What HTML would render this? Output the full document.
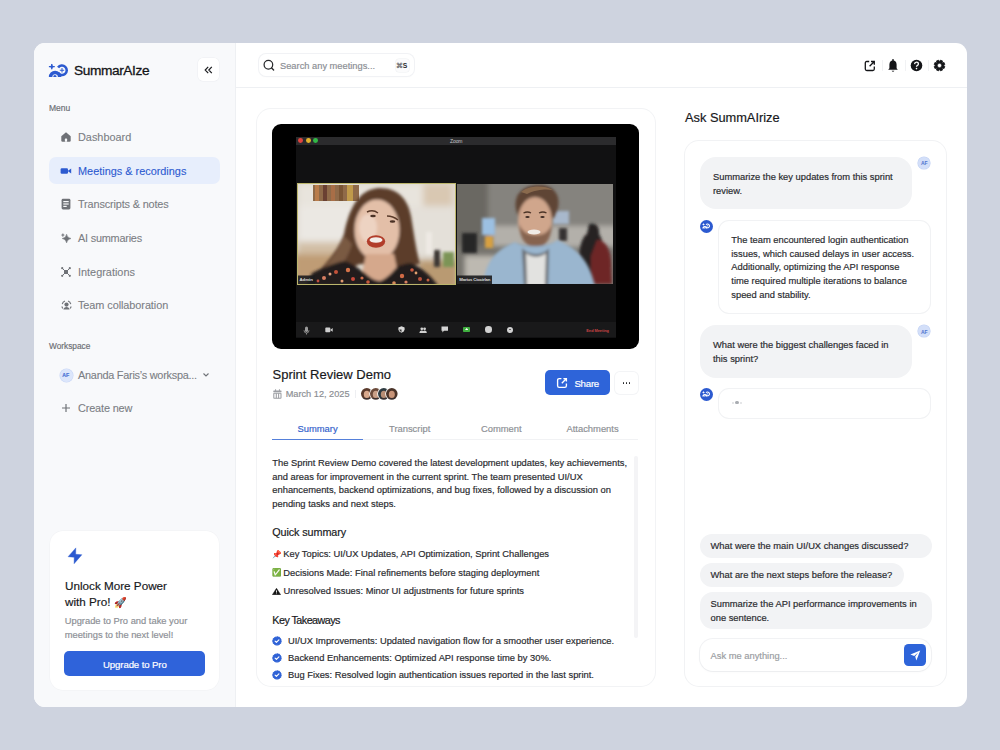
<!DOCTYPE html><html><head><meta charset="utf-8"><style>
*{box-sizing:border-box;margin:0;padding:0}
html,body{width:1000px;height:750px;overflow:hidden}
body{background:#ced3df;font-family:"Liberation Sans",sans-serif;position:relative}
.a{position:absolute}
.t{position:absolute;white-space:nowrap;line-height:1}
.m{-webkit-text-stroke:0.18px currentColor}
.s{-webkit-text-stroke:0.1px currentColor}
.b{-webkit-text-stroke:0.18px currentColor}
</style></head><body><div class="a" style="left:34px;top:43px;width:933px;height:664px;background:#fff;border-radius:11px"></div>
<div class="a" style="left:34px;top:43px;width:202px;height:664px;background:#f8f9fb;border-radius:11px 0 0 11px;border-right:1px solid #eef0f3"></div>
<svg class="a" style="left:48px;top:63px" width="22" height="15" viewBox="0 0 220 150">
<g fill="none" stroke="#2c5ad0">
<path d="M101 45.8 A47.5 47.5 0 1 1 98.9 96.8" stroke-width="25.5"/>
<path d="M26 139 A45 45 0 0 1 116 139" stroke-width="35"/>
</g>
<g fill="#2c5ad0">
<path d="M52 139 A17 18 0 0 1 86 139Z" fill="#2c5ad0"/>
<path d="M38 8 L46 28 L67 36 L46 44 L38 64 L30 44 L9 36 L30 28Z"/>
<path d="M32 9 H44 V63 H32Z M9 30 H67 V42 H9Z"/>
<path d="M135 50 H145 V94 H135Z M118 67 H162 V77 H118Z"/>
</g></svg>
<div class="t " style="left:74.00px;top:63.70px;font-size:13.7px;color:#141518;font-weight:400;letter-spacing:-0.4px;-webkit-text-stroke:0.3px #141518">SummarAIze</div>
<div class="a" style="left:198px;top:58px;width:21px;height:23px;background:#fff;border-radius:5px;box-shadow:0 0 0 0.5px #eceef1"></div>
<svg class="a" style="left:204px;top:66px" width="9" height="8" viewBox="0 0 9 8"><path d="M4.2 0.8 L1.2 4 L4.2 7.2 M7.8 0.8 L4.8 4 L7.8 7.2" fill="none" stroke="#1b1c1f" stroke-width="1.2"/></svg>
<div class="t b" style="left:49.00px;top:104.20px;font-size:8.5px;color:#6d7075;font-weight:400;">Menu</div>
<div class="a" style="left:49px;top:157px;width:171px;height:27px;background:#e7eefc;border-radius:7px"></div>
<div class="t s" style="left:78.00px;top:131.97px;font-size:10.9px;color:#7b7e84;font-weight:400;letter-spacing:0px">Dashboard</div>
<div class="t s" style="left:78.00px;top:165.57px;font-size:10.9px;color:#2c5ad0;font-weight:400;letter-spacing:0px">Meetings &amp; recordings</div>
<div class="t s" style="left:78.00px;top:199.17px;font-size:10.9px;color:#7b7e84;font-weight:400;letter-spacing:-0.15px">Transcripts &amp; notes</div>
<div class="t s" style="left:78.00px;top:232.77px;font-size:10.9px;color:#7b7e84;font-weight:400;letter-spacing:-0.22px">AI summaries</div>
<div class="t s" style="left:78.00px;top:267.27px;font-size:10.9px;color:#7b7e84;font-weight:400;letter-spacing:0px">Integrations</div>
<div class="t s" style="left:78.00px;top:300.47px;font-size:10.9px;color:#7b7e84;font-weight:400;letter-spacing:-0.07px">Team collaboration</div>
<svg class="a" style="left:61px;top:132px" width="10" height="10" viewBox="0 0 10 10"><path d="M5 0.3 L9.7 4.2 V8.6 Q9.7 9.8 8.5 9.8 H1.5 Q0.3 9.8 0.3 8.6 V4.2Z" fill="#6f7277"/><rect x="3.9" y="6.6" width="2.2" height="3.2" rx="0.6" fill="#f8f9fb"/></svg>
<svg class="a" style="left:60px;top:167px" width="12" height="8" viewBox="0 0 12 8"><rect x="0.6" y="1.2" width="7.4" height="5.6" rx="1.2" fill="#2c5ad0"/><path d="M7.6 4 L11.2 1.4 V6.6Z" fill="#2c5ad0"/></svg>
<svg class="a" style="left:61px;top:198px" width="10" height="12" viewBox="0 0 10 12"><rect x="0.6" y="0.8" width="8.8" height="10.6" rx="1.4" fill="#6f7277"/><rect x="2.3" y="3" width="5.4" height="1.2" fill="#f8f9fb"/><rect x="2.3" y="5.4" width="5.4" height="1.2" fill="#f8f9fb"/><rect x="2.3" y="7.8" width="3.4" height="1.2" fill="#f8f9fb"/></svg>
<svg class="a" style="left:61px;top:233px" width="11" height="11" viewBox="0 0 11 11"><path d="M5.6 1.2 Q6.2 4.9 10 5.5 Q6.2 6.1 5.6 9.9 Q5 6.1 1.2 5.5 Q5 4.9 5.6 1.2Z" fill="#6f7277" stroke="#6f7277" stroke-width="0.5" stroke-linejoin="round"/><path d="M1.9 0.5 Q2.1 1.9 3.4 2.1 Q2.1 2.3 1.9 3.7 Q1.7 2.3 0.4 2.1 Q1.7 1.9 1.9 0.5Z" fill="#6f7277" stroke="#6f7277" stroke-width="0.4"/></svg>
<svg class="a" style="left:61px;top:267px" width="10" height="10" viewBox="0 0 10 10"><g stroke="#6f7277" stroke-width="1"><path d="M1.2 1.2 L8.8 8.8 M8.8 1.2 L1.2 8.8"/></g><g fill="#6f7277"><circle cx="1.2" cy="1.2" r="1.1"/><circle cx="8.8" cy="1.2" r="1.1"/><circle cx="1.2" cy="8.8" r="1.1"/><circle cx="8.8" cy="8.8" r="1.1"/><rect x="3" y="3" width="4" height="4" rx="0.5"/></g></svg>
<svg class="a" style="left:61px;top:300px" width="11" height="10" viewBox="0 0 11 10"><g fill="#6f7277"><circle cx="5.5" cy="4.6" r="2.1"/><path d="M2.4 9.6 Q2.8 6.9 5.5 6.9 Q8.2 6.9 8.6 9.6Z"/></g><g fill="none" stroke="#6f7277" stroke-width="1.1"><path d="M1.2 4.2 Q1.8 1.6 4 0.9 M9.8 4.2 Q9.2 1.6 7 0.9 M0.8 6.4 L1.8 8.4 M10.2 6.4 L9.2 8.4"/></g></svg>
<div class="t b" style="left:49.00px;top:342.07px;font-size:8.3px;color:#6d7075;font-weight:400;">Workspace</div>
<div class="a" style="left:59.5px;top:368.5px;width:13px;height:13px;background:#dce6fb;border-radius:50%;box-shadow:0 0 0 0.5px #c9d7f6"></div>
<div class="t b" style="left:62.30px;top:373.40px;font-size:5.2px;color:#4b74d6;font-weight:700;">AF</div>
<div class="t s" style="left:78.00px;top:369.77px;font-size:10.9px;color:#7b7e84;font-weight:400;letter-spacing:-0.25px">Ananda Faris’s workspa...</div>
<svg class="a" style="left:202px;top:372px" width="8" height="6" viewBox="0 0 8 6"><path d="M1.5 1.5 L4 4 L6.5 1.5" fill="none" stroke="#6f7277" stroke-width="1.1"/></svg>
<svg class="a" style="left:61px;top:403px" width="10" height="10" viewBox="0 0 10 10"><path d="M5 1 V9 M1 5 H9" stroke="#6f7277" stroke-width="1.2"/></svg>
<div class="t s" style="left:78.00px;top:403.37px;font-size:10.9px;color:#7b7e84;font-weight:400;letter-spacing:-0.15px">Create new</div>
<div class="a" style="left:50px;top:531px;width:169px;height:159px;background:#fff;border-radius:13px;box-shadow:0 0 0 0.5px #f0f1f4"></div>
<svg class="a" style="left:66px;top:547px" width="17" height="17" viewBox="0 0 17 17"><path d="M9.8 0.9 L9.7 7.3 L15.9 7.7 L8.1 16.7 L8.2 10.3 L2.1 9.7Z" fill="#2c5ad0" stroke="#2c5ad0" stroke-width="0.4" stroke-linejoin="round"/></svg>
<div class="t m" style="left:65.00px;top:580.10px;font-size:11.7px;color:#17181b;font-weight:400;">Unlock More Power</div>
<div class="t m" style="left:65.00px;top:595.90px;font-size:11.7px;color:#17181b;font-weight:400;">with Pro! <span style="font-size:10px">🚀</span></div>
<div class="t b" style="left:64.70px;top:617.49px;font-size:9.35px;color:#8d9096;font-weight:400;">Upgrade to Pro and take your</div>
<div class="t b" style="left:64.70px;top:630.89px;font-size:9.35px;color:#8d9096;font-weight:400;">meetings to the next level!</div>
<div class="a" style="left:64px;top:651px;width:141px;height:25px;background:#2f63da;border-radius:5px"></div>
<div class="t m" style="left:103.00px;top:659.67px;font-size:9.6px;color:#ffffff;font-weight:400;letter-spacing:-0.1px">Upgrade to Pro</div>
<div class="a" style="left:236px;top:87px;width:731px;height:1px;background:#eef0f3"></div>
<div class="a" style="left:259px;top:54px;width:155.3px;height:22.3px;background:#fff;border-radius:7px;box-shadow:0 0 0 1px #f1f2f5,0 1px 2px rgba(0,0,0,0.03)"></div>
<svg class="a" style="left:262px;top:58px" width="14" height="15" viewBox="0 0 14 15"><circle cx="6.4" cy="6.7" r="4.3" fill="none" stroke="#2a2b2e" stroke-width="1.25"/><path d="M9.6 9.9 L11.6 11.9" stroke="#2a2b2e" stroke-width="1.4" stroke-linecap="round"/></svg>
<div class="t b" style="left:280.00px;top:62.23px;font-size:9.3px;color:#8b8e94;font-weight:400;">Search any meetings...</div>
<div class="a" style="left:395.5px;top:59px;width:13px;height:12.8px;background:#fbfbfc;border-radius:3px;box-shadow:0 0 0 0.6px #eef0f2"></div>
<div class="t " style="left:396.00px;top:62.94px;font-size:6.8px;color:#2b2c30;font-weight:700;letter-spacing:-0.2px"><span style="color:#6a6b6f">⌘</span>S</div>
<div class="a" style="left:882.3px;top:60px;width:0.8px;height:11px;background:#f1f2f4"></div>
<div class="a" style="left:905.3px;top:60px;width:0.8px;height:11px;background:#f1f2f4"></div>
<div class="a" style="left:928.3px;top:60px;width:0.8px;height:11px;background:#f1f2f4"></div>
<svg class="a" style="left:864px;top:59.5px" width="12" height="12" viewBox="0 0 12 12"><path d="M5.2 1.5 H2.8 Q1.3 1.5 1.3 3 V9 Q1.3 10.5 2.8 10.5 H8.8 Q10.3 10.5 10.3 9 V6.6" fill="none" stroke="#141518" stroke-width="1.3"/><path d="M5.6 6.2 L9.8 2 M7 1.5 H10.3 V4.8" fill="none" stroke="#141518" stroke-width="1.3"/></svg>
<svg class="a" style="left:887px;top:59px" width="12" height="14" viewBox="0 0 12 14"><path d="M6 1.2 Q9.4 1.6 9.6 5.6 V9.2 L10.8 10.8 H1.2 L2.4 9.2 V5.6 Q2.6 1.6 6 1.2Z" fill="#141518"/><rect x="5.2" y="0" width="1.6" height="2" rx="0.8" fill="#141518"/><path d="M4.6 11.8 Q6 13.6 7.4 11.8Z" fill="#141518"/></svg>
<svg class="a" style="left:910px;top:59px" width="13" height="13" viewBox="0 0 13 13"><circle cx="6.5" cy="6.5" r="5.8" fill="#141518"/><path d="M4.6 5.1 Q4.7 3.2 6.5 3.2 Q8.4 3.2 8.4 5 Q8.4 6.1 7.2 6.6 Q6.5 6.9 6.5 7.8" fill="none" stroke="#fff" stroke-width="1.3"/><circle cx="6.5" cy="9.6" r="0.8" fill="#fff"/></svg>
<svg class="a" style="left:933.3px;top:59.2px" width="13" height="13" viewBox="0 0 13 13"><path fill="#141518" fill-rule="evenodd" stroke="#141518" stroke-width="0.7" stroke-linejoin="round" d="M10.79 6.77 L11.90 7.55 L11.06 9.57 L9.73 9.34 L9.34 9.73 L9.57 11.06 L7.55 11.90 L6.77 10.79 L6.23 10.79 L5.45 11.90 L3.43 11.06 L3.66 9.73 L3.27 9.34 L1.94 9.57 L1.10 7.55 L2.21 6.77 L2.21 6.23 L1.10 5.45 L1.94 3.43 L3.27 3.66 L3.66 3.27 L3.43 1.94 L5.45 1.10 L6.23 2.21 L6.77 2.21 L7.55 1.10 L9.57 1.94 L9.34 3.27 L9.73 3.66 L11.06 3.43 L11.90 5.45 L10.79 6.23Z M6.5 4.3 A2.2 2.2 0 1 0 6.5 8.7 A2.2 2.2 0 1 0 6.5 4.3Z"/></svg>
<div class="a" style="left:257px;top:108.5px;width:397.5px;height:577.5px;background:#fff;border-radius:14px;box-shadow:0 0 0 1px #f2f3f5"></div>
<div class="a" style="left:272px;top:124px;width:367px;height:225px;background:#000;border-radius:9px"></div>
<div class="a" style="left:296px;top:136.5px;width:320px;height:201px;background:#111112"></div>
<div class="a" style="left:296px;top:136.5px;width:320px;height:8.5px;background:#2b2b2d"></div>
<div class="a" style="left:298.3px;top:138.4px;width:4.8px;height:4.8px;background:#e0443e;border-radius:50%"></div>
<div class="a" style="left:305.8px;top:138.4px;width:4.8px;height:4.8px;background:#e2b22c;border-radius:50%"></div>
<div class="a" style="left:313.20000000000005px;top:138.4px;width:4.8px;height:4.8px;background:#32b847;border-radius:50%"></div>
<div class="t " style="left:450.00px;top:139.37px;font-size:5px;color:#c9c9cb;font-weight:400;letter-spacing:-0.1px">Zoom</div>
<div class="a" style="left:296.5px;top:182.5px;width:159.5px;height:102px;background:#bcb66c"></div>
<svg class="a" style="left:297.5px;top:183.5px" width="157.5" height="100" viewBox="0 0 157.5 100">
<defs><filter id="bl" x="-10%" y="-10%" width="120%" height="120%"><feGaussianBlur stdDeviation="1.5"/></filter>
<filter id="bl2"><feGaussianBlur stdDeviation="0.7"/></filter>
<filter id="bl3" x="-20%" y="-20%" width="140%" height="140%"><feGaussianBlur stdDeviation="3"/></filter>
<clipPath id="c1"><rect width="157.5" height="100"/></clipPath></defs>
<g clip-path="url(#c1)">
<rect width="157.5" height="100" fill="#dcd6cc"/>
<g filter="url(#bl3)">
<rect x="0" y="0" width="157.5" height="22" fill="#e8e4dd"/>
<rect x="0" y="22" width="70" height="40" fill="#ebe8e3"/>
<rect x="100" y="22" width="57.5" height="50" fill="#e4e0d9"/>
<rect x="0" y="58" width="45" height="16" fill="#d2bfa6"/>
<rect x="-5" y="70" width="45" height="35" fill="#bf9c74"/>
<rect x="120" y="76" width="40" height="30" fill="#b99a72"/>
<rect x="125" y="0" width="30" height="22" fill="#d9c8b2"/>
</g>
<g filter="url(#bl)">
<rect x="136" y="66" width="6" height="17" fill="#3a3631"/>
<rect x="145" y="68" width="11" height="15" fill="#7b9457"/>
<rect x="128" y="48" width="6" height="22" fill="#eeeae4"/>
</g>
<g filter="url(#bl2)">
<rect x="15" y="1" width="46" height="16" fill="#8f6a48"/>
<rect x="17" y="1" width="4" height="16" fill="#b97c4c"/>
<rect x="25" y="1" width="4" height="16" fill="#6a4030"/>
<rect x="33" y="1" width="4" height="16" fill="#a86e46"/>
<rect x="41" y="1" width="4" height="16" fill="#7a5436"/>
<rect x="49" y="1" width="6" height="16" fill="#c09a4c"/>
</g>
<g filter="url(#bl)">
<path d="M80 4 C98 3 110 14 113 32 C116 50 118 66 122 80 L100 84 L62 80 C48 86 32 92 14 94 C28 80 40 66 46 50 C50 30 58 6 80 4Z" fill="#5c3e2c"/>
<path d="M46 52 C40 68 30 82 14 94 L34 92 C42 84 50 74 54 60Z" fill="#7a5a42"/>
<ellipse cx="79" cy="46" rx="22.5" ry="30.5" fill="#e3bfa8"/>
<ellipse cx="70" cy="44" rx="9" ry="14" fill="#edd3c2"/>
<path d="M68 70 L96 70 L102 100 L62 100Z" fill="#d5a88c"/>
<path d="M8 102 L14 89 C28 82 40 78 47 77 C56 80 62 86 67 89 C72 94 78 97 82 97 C90 94 96 86 100 82 C106 80 110 79 113 79 C124 84 134 92 140 102Z" fill="#241a1a"/>
</g>
<g filter="url(#bl2)">
<ellipse cx="78" cy="57.5" rx="9.2" ry="6.2" fill="#b23e2c"/>
<ellipse cx="78" cy="56" rx="6.5" ry="2.8" fill="#f3ede8"/>
<ellipse cx="75" cy="32" rx="2.8" ry="1.3" fill="#4a3025"/>
<ellipse cx="94.5" cy="37.5" rx="2.8" ry="1.3" fill="#4a3025"/>
<path d="M69 28 Q75 25 80 29 M89 32 Q95 32 100 36" stroke="#5a3a2a" stroke-width="1.4" fill="none"/>
<circle cx="38" cy="88" r="2" fill="#c4523a"/><circle cx="50" cy="86" r="2.2" fill="#d7734a"/>
<circle cx="26" cy="94" r="2" fill="#d77b60"/><circle cx="55" cy="95" r="2" fill="#c8483a"/>
<circle cx="104" cy="92" r="2.2" fill="#d06a45"/><circle cx="114" cy="86" r="1.8" fill="#c95a40"/>
<circle cx="122" cy="95" r="2" fill="#b8513c"/><circle cx="96" cy="99" r="1.8" fill="#d68a5a"/>
<circle cx="64" cy="94" r="1.6" fill="#cc6a48"/><circle cx="44" cy="97" r="1.5" fill="#e09a70"/><circle cx="32" cy="90" r="1.5" fill="#e0a080"/><circle cx="70" cy="98" r="1.8" fill="#c85a3a"/><circle cx="108" cy="98" r="1.6" fill="#d88060"/><circle cx="130" cy="96" r="1.5" fill="#c06040"/><circle cx="118" cy="89" r="1.4" fill="#e0a070"/><circle cx="20" cy="97" r="1.4" fill="#c05040"/>
</g>
</g>
<rect x="0" y="91.5" width="17" height="8.5" fill="#1c1c1e" opacity="0.9"/>
</svg>
<div class="t " style="left:299.50px;top:278.36px;font-size:4.3px;color:#dedede;font-weight:700;">Admin</div>
<svg class="a" style="left:457.3px;top:184px" width="156" height="100" viewBox="0 0 156 100">
<defs><filter id="br" x="-10%" y="-10%" width="120%" height="120%"><feGaussianBlur stdDeviation="1.4"/></filter>
<filter id="br2"><feGaussianBlur stdDeviation="0.7"/></filter>
<filter id="br3" x="-20%" y="-20%" width="140%" height="140%"><feGaussianBlur stdDeviation="2.5"/></filter>
<clipPath id="c2"><rect width="156" height="100"/></clipPath></defs>
<g clip-path="url(#c2)">
<rect width="156" height="100" fill="#7f7d78"/>
<g filter="url(#br3)">
<rect x="-5" y="-5" width="36" height="110" fill="#6a6762"/>
<rect x="31" y="-5" width="130" height="48" fill="#85837e"/>
<rect x="35" y="42" width="125" height="21" fill="#b3b0aa"/>
<rect x="-5" y="62" width="70" height="45" fill="#77746e"/>
<rect x="8" y="72" width="30" height="24" fill="#bdb9b1"/>
</g>
<g filter="url(#br)">
<rect x="5" y="49" width="15" height="20" fill="#262628"/>
<rect x="25" y="34" width="13" height="17" fill="#9cc0e2"/>
<rect x="28" y="52" width="8" height="12" fill="#d8a040"/>
<rect x="96" y="27" width="16" height="13" fill="#a8b8cc"/>
<rect x="102" y="44" width="8" height="13" fill="#353333"/>
<path d="M132 40 C138 38 143 42 142 50 C146 56 148 66 148 80 L148 100 L122 100 L122 72 C123 60 126 52 130 50Z" fill="#262222"/>
<path d="M140 56 C148 56 153 64 154 76 L155 100 L134 100 L134 72Z" fill="#6e2628"/>
</g>
<g filter="url(#br)">
<path d="M59 26 C56 10 66 2 80 1 C94 0 104 8 101 24 L97 34 L62 34Z" fill="#5e4536"/>
<ellipse cx="78" cy="37" rx="17" ry="24" fill="#d0a68c"/>
<path d="M62 40 C63 58 71 63 79 63 C87 63 94 58 95 40 C91 49 86 51 79 51 C72 51 66 49 62 40Z" fill="#86644f"/>
<path d="M26 102 C28 78 38 66 58 58 C66 64 92 64 100 56 C120 64 132 76 138 102Z" fill="#9ab6cf"/>
<path d="M65 64 C72 72 86 72 92 64 L91 102 L67 102Z" fill="#666a70"/>
<path d="M69 69 C74 74 84 74 89 69 L88 102 L70 102Z" fill="#e2e2e0"/>
</g>
<g filter="url(#br2)">
<ellipse cx="77" cy="48" rx="6.5" ry="2.6" fill="#f0ebe6"/><ellipse cx="70.5" cy="33" rx="2.2" ry="1.1" fill="#3e2c24"/><ellipse cx="85.5" cy="33" rx="2.2" ry="1.1" fill="#3e2c24"/><path d="M66.5 29 Q70.5 27 74 29 M82 29 Q86 27 89.5 29" stroke="#4e3628" stroke-width="1.3" fill="none"/>
<path d="M64 8 C70 2 86 0 96 6 C90 5 80 5 70 10Z" fill="#8a6a4e"/>
</g>
</g>
<rect x="0" y="91.5" width="35" height="8.5" fill="#1c1c1e" opacity="0.9"/>
</svg>
<div class="t " style="left:459.30px;top:278.36px;font-size:4.3px;color:#dedede;font-weight:700;letter-spacing:-0.15px">Marius Ciocirlan</div>
<div class="a" style="left:296px;top:322px;width:320px;height:15px;background:#19191a"></div>
<svg class="a" style="left:303px;top:325.5px" width="7" height="9" viewBox="0 0 7 9"><rect x="2" y="0.5" width="3" height="5.5" rx="1.5" fill="#9a9a9a"/><path d="M1 4.2 Q1 7 3.5 7 Q6 7 6 4.2 M3.5 7 V8.6" fill="none" stroke="#9a9a9a" stroke-width="0.8"/></svg>
<svg class="a" style="left:325px;top:327px" width="8" height="6" viewBox="0 0 8 6"><rect x="0.3" y="0.6" width="5" height="4.6" rx="0.8" fill="#cfcfcf"/><path d="M5 2.9 L7.7 1 V4.8Z" fill="#cfcfcf"/></svg>
<svg class="a" style="left:397.5px;top:326.3px" width="7" height="7" viewBox="0 0 7 7"><path d="M3.5 0.3 L6.6 1.4 V3.6 Q6.6 5.8 3.5 6.8 Q0.4 5.8 0.4 3.6 V1.4Z" fill="#d8d8d8"/><path d="M3.5 1.2 V6 Q1.4 5.2 1.4 3.6 H3.5Z" fill="#333"/></svg>
<svg class="a" style="left:418.5px;top:326.5px" width="8" height="6.5" viewBox="0 0 8 6.5"><circle cx="2.8" cy="1.8" r="1.4" fill="#d0d0d0"/><circle cx="5.6" cy="1.8" r="1.4" fill="#d0d0d0"/><path d="M0.3 6.2 Q0.5 3.6 2.8 3.6 Q5.2 3.6 5.4 6.2Z M4 6.2 Q4.2 3.6 5.6 3.6 Q7.8 3.6 7.9 6.2Z" fill="#d0d0d0"/></svg>
<svg class="a" style="left:441px;top:326.3px" width="7.5" height="7" viewBox="0 0 7.5 7"><path d="M0.5 0.5 H7 V4.8 H3 L1.4 6.4 V4.8 H0.5Z" fill="#d4d4d4"/></svg>
<div class="a" style="left:462.8px;top:327.2px;width:7px;height:4.8px;background:#3fae3f;border-radius:0.8px"></div>
<svg class="a" style="left:464.6px;top:328px" width="3.4" height="3" viewBox="0 0 3.4 3"><path d="M1.7 0 L3.4 2 H0Z" fill="#fff"/></svg>
<div class="a" style="left:485.2px;top:326.2px;width:6.6px;height:6.6px;background:#d2d2d2;border-radius:50%"></div>
<div class="a" style="left:507.3px;top:326.5px;width:6px;height:6px;background:#d2d2d2;border-radius:50%"></div>
<div class="a" style="left:509.4px;top:328.6px;width:1.8px;height:1.8px;background:#555;border-radius:50%"></div>
<div class="t " style="left:586.30px;top:328.90px;font-size:3.9px;color:#c94545;font-weight:700;letter-spacing:-0.05px">End Meeting</div>
<div class="t m" style="left:272.50px;top:367.70px;font-size:13px;color:#17181b;font-weight:400;">Sprint Review Demo</div>
<svg class="a" style="left:273px;top:388.6px" width="9" height="10" viewBox="0 0 9 10"><g fill="#9c9ea3"><rect x="2" y="0.2" width="1.1" height="1.8" rx="0.4"/><rect x="5.9" y="0.2" width="1.1" height="1.8" rx="0.4"/><rect x="0.3" y="1.5" width="8.2" height="1.8" rx="0.5"/></g><g fill="none" stroke="#9c9ea3" stroke-width="1.05"><rect x="0.8" y="4.2" width="7.2" height="5" rx="0.5"/><path d="M3.3 4.2 V9.2 M5.6 4.2 V9.2"/></g></svg>
<div class="t b" style="left:285.70px;top:390.01px;font-size:9.2px;color:#8b8e93;font-weight:400;">March 12, 2025</div>
<div class="a" style="left:354.5px;top:390px;width:1px;height:8px;background:#eeeff2"></div>
<svg class="a" style="left:360.2px;top:387.2px" width="13.6" height="13.6" viewBox="0 0 13.6 13.6"><defs><clipPath id="av0"><circle cx="6.8" cy="6.8" r="5.8"/></clipPath></defs><circle cx="6.8" cy="6.8" r="6.6" fill="#fff"/><g clip-path="url(#av0)"><rect width="13.6" height="13.6" fill="#5a3a2c"/><ellipse cx="6.8" cy="7.4" rx="3" ry="3.6" fill="#d9a88c"/><rect x="0" y="11" width="13.6" height="3" fill="#3a3030"/></g></svg>
<svg class="a" style="left:368.59999999999997px;top:387.2px" width="13.6" height="13.6" viewBox="0 0 13.6 13.6"><defs><clipPath id="av1"><circle cx="6.8" cy="6.8" r="5.8"/></clipPath></defs><circle cx="6.8" cy="6.8" r="6.6" fill="#fff"/><g clip-path="url(#av1)"><rect width="13.6" height="13.6" fill="#6b4a3a"/><ellipse cx="6.8" cy="7.4" rx="3" ry="3.6" fill="#caa088"/><rect x="0" y="11" width="13.6" height="3" fill="#3a3030"/></g></svg>
<svg class="a" style="left:377.0px;top:387.2px" width="13.6" height="13.6" viewBox="0 0 13.6 13.6"><defs><clipPath id="av2"><circle cx="6.8" cy="6.8" r="5.8"/></clipPath></defs><circle cx="6.8" cy="6.8" r="6.6" fill="#fff"/><g clip-path="url(#av2)"><rect width="13.6" height="13.6" fill="#2e3a40"/><ellipse cx="6.8" cy="7.4" rx="3" ry="3.6" fill="#b78d74"/><rect x="0" y="11" width="13.6" height="3" fill="#3a3030"/></g></svg>
<svg class="a" style="left:385.4px;top:387.2px" width="13.6" height="13.6" viewBox="0 0 13.6 13.6"><defs><clipPath id="av3"><circle cx="6.8" cy="6.8" r="5.8"/></clipPath></defs><circle cx="6.8" cy="6.8" r="6.6" fill="#fff"/><g clip-path="url(#av3)"><rect width="13.6" height="13.6" fill="#4a3328"/><ellipse cx="6.8" cy="7.4" rx="3" ry="3.6" fill="#c89478"/><rect x="0" y="11" width="13.6" height="3" fill="#3a3030"/></g></svg>
<div class="a" style="left:545px;top:370px;width:65px;height:25px;background:#2e64d9;border-radius:5px"></div>
<svg class="a" style="left:556px;top:377px" width="13" height="12" viewBox="0 0 13 12"><path d="M5.4 1.6 H3.2 Q1.6 1.6 1.6 3.2 V8.8 Q1.6 10.4 3.2 10.4 H8.8 Q10.4 10.4 10.4 8.8 V6.6" fill="none" stroke="#fff" stroke-width="1.35"/><path d="M5.8 6.2 L10.2 1.8 M7.4 1.6 H10.4 V4.6" fill="none" stroke="#fff" stroke-width="1.35"/></svg>
<div class="t m" style="left:574.40px;top:379.49px;font-size:9.7px;color:#ffffff;font-weight:400;letter-spacing:-0.25px">Share</div>
<div class="a" style="left:615px;top:371.5px;width:23px;height:22px;background:#fff;border-radius:5px;box-shadow:0 0 0 1px #f3f4f6"></div>
<div class="a" style="left:622.8px;top:382.2px;width:1.5px;height:1.5px;background:#1b1c1f;border-radius:50%"></div>
<div class="a" style="left:625.8px;top:382.2px;width:1.5px;height:1.5px;background:#1b1c1f;border-radius:50%"></div>
<div class="a" style="left:628.8px;top:382.2px;width:1.5px;height:1.5px;background:#1b1c1f;border-radius:50%"></div>
<div class="a" style="left:272px;top:439px;width:366px;height:1px;background:#f1f2f4"></div>
<div class="a" style="left:272px;top:438.7px;width:91px;height:1.3px;background:#5580da"></div>
<div class="t b" style="left:297.50px;top:423.74px;font-size:9.4px;color:#3462cc;font-weight:400;">Summary</div>
<div class="t b" style="left:389.00px;top:423.74px;font-size:9.4px;color:#8d9095;font-weight:400;">Transcript</div>
<div class="t b" style="left:481.00px;top:423.74px;font-size:9.4px;color:#8d9095;font-weight:400;">Comment</div>
<div class="t b" style="left:566.50px;top:423.74px;font-size:9.4px;color:#8d9095;font-weight:400;">Attachments</div>
<div class="a" style="left:634.3px;top:455.5px;width:3.6px;height:182.5px;background:#f4f4f6;border-radius:2px"></div>
<div class="t b" style="left:272.30px;top:459.09px;font-size:9.35px;color:#2a2b2f;font-weight:400;">The Sprint Review Demo covered the latest development updates, key achievements,</div>
<div class="t b" style="left:272.30px;top:472.69px;font-size:9.35px;color:#2a2b2f;font-weight:400;">and areas for improvement in the current sprint. The team presented UI/UX</div>
<div class="t b" style="left:272.30px;top:486.29px;font-size:9.35px;color:#2a2b2f;font-weight:400;">enhancements, backend optimizations, and bug fixes, followed by a discussion on</div>
<div class="t b" style="left:272.30px;top:499.89px;font-size:9.35px;color:#2a2b2f;font-weight:400;">pending tasks and next steps.</div>
<div class="t m" style="left:272.30px;top:527.06px;font-size:10.8px;color:#17181b;font-weight:400;letter-spacing:-0.1px">Quick summary</div>
<div class="t b" style="left:272.30px;top:550.09px;font-size:9.35px;color:#2a2b2f;font-weight:400;"><span style="font-size:7.5px;position:relative;top:-0.5px">📌</span><span style="margin-left:2px" class="m">Key Topics:</span> UI/UX Updates, API Optimization, Sprint Challenges</div>
<div class="t b" style="left:272.30px;top:568.79px;font-size:9.35px;color:#2a2b2f;font-weight:400;"><span style="font-size:7.5px;position:relative;top:-0.5px">✅</span><span style="margin-left:2px" class="m">Decisions Made:</span> Final refinements before staging deployment</div>
<div class="t b" style="left:272.30px;top:587.39px;font-size:9.35px;color:#2a2b2f;font-weight:400;"><svg width="9" height="7" viewBox="0 0 9 7" style="vertical-align:-0.2px;margin-right:0.3px"><path d="M4.5 0.3 L8.6 6.7 H0.4Z" fill="#161616" stroke="#161616" stroke-width="0.5" stroke-linejoin="round"/><path d="M4.5 2.4 V4.6" stroke="#fff" stroke-width="0.9"/><circle cx="4.5" cy="5.7" r="0.45" fill="#fff"/></svg><span style="margin-left:2px" class="m">Unresolved Issues:</span> Minor UI adjustments for future sprints</div>
<div class="t m" style="left:272.30px;top:615.06px;font-size:10.8px;color:#17181b;font-weight:400;letter-spacing:-0.55px">Key Takeaways</div>
<svg class="a" style="left:272.4px;top:635.5999999999999px" width="10" height="10" viewBox="0 0 10 10"><path fill="#2f62d6" d="M5 0.5 L6.1 1.1 L7.4 1.1 L8 2.2 L9 3 L8.9 4.3 L9.5 5 L8.9 6.1 L8.9 7.3 L7.8 7.9 L7 8.9 L5.7 8.8 L5 9.5 L4.3 8.8 L3 8.9 L2.2 7.9 L1.1 7.3 L1.1 6.1 L0.5 5 L1.1 3.9 L1.1 2.7 L2.2 2.1 L3 1.1 L4.3 1.2Z" stroke="#2f62d6" stroke-width="0.8" stroke-linejoin="round"/><path d="M3.1 5.1 L4.4 6.3 L6.9 3.8" fill="none" stroke="#fff" stroke-width="1.15" stroke-linecap="round" stroke-linejoin="round"/></svg>
<div class="t b" style="left:288.00px;top:636.69px;font-size:9.35px;color:#2a2b2f;font-weight:400;"><span class="m">UI/UX Improvements:</span> Updated navigation flow for a smoother user experience.</div>
<svg class="a" style="left:272.4px;top:652.8px" width="10" height="10" viewBox="0 0 10 10"><path fill="#2f62d6" d="M5 0.5 L6.1 1.1 L7.4 1.1 L8 2.2 L9 3 L8.9 4.3 L9.5 5 L8.9 6.1 L8.9 7.3 L7.8 7.9 L7 8.9 L5.7 8.8 L5 9.5 L4.3 8.8 L3 8.9 L2.2 7.9 L1.1 7.3 L1.1 6.1 L0.5 5 L1.1 3.9 L1.1 2.7 L2.2 2.1 L3 1.1 L4.3 1.2Z" stroke="#2f62d6" stroke-width="0.8" stroke-linejoin="round"/><path d="M3.1 5.1 L4.4 6.3 L6.9 3.8" fill="none" stroke="#fff" stroke-width="1.15" stroke-linecap="round" stroke-linejoin="round"/></svg>
<div class="t b" style="left:288.00px;top:653.89px;font-size:9.35px;color:#2a2b2f;font-weight:400;"><span class="m">Backend Enhancements:</span> Optimized API response time by 30%.</div>
<svg class="a" style="left:272.4px;top:669.8px" width="10" height="10" viewBox="0 0 10 10"><path fill="#2f62d6" d="M5 0.5 L6.1 1.1 L7.4 1.1 L8 2.2 L9 3 L8.9 4.3 L9.5 5 L8.9 6.1 L8.9 7.3 L7.8 7.9 L7 8.9 L5.7 8.8 L5 9.5 L4.3 8.8 L3 8.9 L2.2 7.9 L1.1 7.3 L1.1 6.1 L0.5 5 L1.1 3.9 L1.1 2.7 L2.2 2.1 L3 1.1 L4.3 1.2Z" stroke="#2f62d6" stroke-width="0.8" stroke-linejoin="round"/><path d="M3.1 5.1 L4.4 6.3 L6.9 3.8" fill="none" stroke="#fff" stroke-width="1.15" stroke-linecap="round" stroke-linejoin="round"/></svg>
<div class="t b" style="left:288.00px;top:670.89px;font-size:9.35px;color:#2a2b2f;font-weight:400;"><span class="m">Bug Fixes:</span> Resolved login authentication issues reported in the last sprint.</div>
<div class="t m" style="left:685.00px;top:111.96px;font-size:12.8px;color:#17181b;font-weight:400;">Ask SummAIrize</div>
<div class="a" style="left:685px;top:141px;width:261px;height:545px;background:#fff;border-radius:14px;box-shadow:0 0 0 1px #f1f2f4"></div>
<div class="a" style="left:700px;top:157px;width:212px;height:52px;background:#f2f3f5;border-radius:16px"></div>
<div class="t b" style="left:713.00px;top:173.19px;font-size:9.35px;color:#2a2b2f;font-weight:400;">Summarize the key updates from this sprint</div>
<div class="t b" style="left:713.00px;top:186.79px;font-size:9.35px;color:#2a2b2f;font-weight:400;">review.</div>
<div class="a" style="left:918.2px;top:157.0px;width:12px;height:12px;background:#d3dff9;border-radius:50%;box-shadow:0 0 0 0.6px #c4d3f4"></div>
<div class="t " style="left:921.10px;top:161.47px;font-size:5px;color:#4f74cf;font-weight:700;letter-spacing:-0.2px">AF</div>
<div class="a" style="left:699.8px;top:220.1px;width:13px;height:13px;background:#2c5ad0;border-radius:50%"></div>
<svg class="a" style="left:701.9px;top:223.4px" width="8.8" height="6" viewBox="0 0 220 150">
<g fill="none" stroke="#fff">
<path d="M101 45.8 A47.5 47.5 0 1 1 98.9 96.8" stroke-width="25.5"/>
<path d="M26 139 A45 45 0 0 1 116 139" stroke-width="35"/>
</g>
<g fill="#fff">
<path d="M52 139 A17 18 0 0 1 86 139Z" fill="#fff"/>
<path d="M38 8 L46 28 L67 36 L46 44 L38 64 L30 44 L9 36 L30 28Z"/>
<path d="M32 9 H44 V63 H32Z M9 30 H67 V42 H9Z"/>
<path d="M135 50 H145 V94 H135Z M118 67 H162 V77 H118Z"/>
</g></svg>
<div class="a" style="left:719px;top:221px;width:211px;height:92px;background:#fff;border-radius:10px;box-shadow:0 0 0 1px #f1f2f4"></div>
<div class="t b" style="left:731.30px;top:236.19px;font-size:9.35px;color:#2a2b2f;font-weight:400;">The team encountered login authentication</div>
<div class="t b" style="left:731.30px;top:249.84px;font-size:9.35px;color:#2a2b2f;font-weight:400;">issues, which caused delays in user access.</div>
<div class="t b" style="left:731.30px;top:263.49px;font-size:9.35px;color:#2a2b2f;font-weight:400;">Additionally, optimizing the API response</div>
<div class="t b" style="left:731.30px;top:277.14px;font-size:9.35px;color:#2a2b2f;font-weight:400;">time required multiple iterations to balance</div>
<div class="t b" style="left:731.30px;top:290.79px;font-size:9.35px;color:#2a2b2f;font-weight:400;">speed and stability.</div>
<div class="a" style="left:700px;top:325px;width:212px;height:53px;background:#f2f3f5;border-radius:16px"></div>
<div class="t b" style="left:713.00px;top:341.09px;font-size:9.35px;color:#2a2b2f;font-weight:400;">What were the biggest challenges faced in</div>
<div class="t b" style="left:713.00px;top:354.69px;font-size:9.35px;color:#2a2b2f;font-weight:400;">this sprint?</div>
<div class="a" style="left:918.2px;top:325.2px;width:12px;height:12px;background:#d3dff9;border-radius:50%;box-shadow:0 0 0 0.6px #c4d3f4"></div>
<div class="t " style="left:921.10px;top:329.67px;font-size:5px;color:#4f74cf;font-weight:700;letter-spacing:-0.2px">AF</div>
<div class="a" style="left:699.8px;top:388.1px;width:13px;height:13px;background:#2c5ad0;border-radius:50%"></div>
<svg class="a" style="left:701.9px;top:391.40000000000003px" width="8.8" height="6" viewBox="0 0 220 150">
<g fill="none" stroke="#fff">
<path d="M101 45.8 A47.5 47.5 0 1 1 98.9 96.8" stroke-width="25.5"/>
<path d="M26 139 A45 45 0 0 1 116 139" stroke-width="35"/>
</g>
<g fill="#fff">
<path d="M52 139 A17 18 0 0 1 86 139Z" fill="#fff"/>
<path d="M38 8 L46 28 L67 36 L46 44 L38 64 L30 44 L9 36 L30 28Z"/>
<path d="M32 9 H44 V63 H32Z M9 30 H67 V42 H9Z"/>
<path d="M135 50 H145 V94 H135Z M118 67 H162 V77 H118Z"/>
</g></svg>
<div class="a" style="left:719px;top:388.5px;width:211px;height:29px;background:#fff;border-radius:10px;box-shadow:0 0 0 1px #f1f2f4"></div>
<div class="a" style="left:731.6px;top:401.8px;width:2px;height:2px;background:#dcdee1;border-radius:50%"></div>
<div class="a" style="left:735.3px;top:401.0px;width:3.4px;height:3.4px;background:#a9acb1;border-radius:50%"></div>
<div class="a" style="left:740.3px;top:401.8px;width:2px;height:2px;background:#dcdee1;border-radius:50%"></div>
<div class="a" style="left:699.5px;top:533.5px;width:232px;height:24px;background:#f2f3f5;border-radius:12px"></div>
<div class="t b" style="left:710.50px;top:541.89px;font-size:9.35px;color:#2a2b2f;font-weight:400;">What were the main UI/UX changes discussed?</div>
<div class="a" style="left:699.5px;top:562.5px;width:204px;height:24px;background:#f2f3f5;border-radius:12px"></div>
<div class="t b" style="left:710.50px;top:570.89px;font-size:9.35px;color:#2a2b2f;font-weight:400;">What are the next steps before the release?</div>
<div class="a" style="left:699.5px;top:591.5px;width:232px;height:37.5px;background:#f2f3f5;border-radius:13px"></div>
<div class="t b" style="left:710.50px;top:600.09px;font-size:9.35px;color:#2a2b2f;font-weight:400;">Summarize the API performance improvements in</div>
<div class="t b" style="left:710.50px;top:613.69px;font-size:9.35px;color:#2a2b2f;font-weight:400;">one sentence.</div>
<div class="a" style="left:700px;top:638.5px;width:231px;height:32.5px;background:#fff;border-radius:13px;box-shadow:0 1px 3px rgba(0,0,0,0.03),0 0 0 1px #f2f3f5"></div>
<div class="t b" style="left:710.50px;top:651.89px;font-size:9.35px;color:#9a9da2;font-weight:400;">Ask me anything...</div>
<div class="a" style="left:904px;top:644.3px;width:22px;height:21.5px;background:#2e64d9;border-radius:4.5px"></div>
<svg class="a" style="left:908.5px;top:648.8px" width="13" height="13" viewBox="0 0 13 13"><path d="M11.2 1.6 L1.4 5.6 L5.2 7 L9.2 3.4 L6.2 7.6 L7.4 11.4Z" fill="#fff"/></svg></body></html>
